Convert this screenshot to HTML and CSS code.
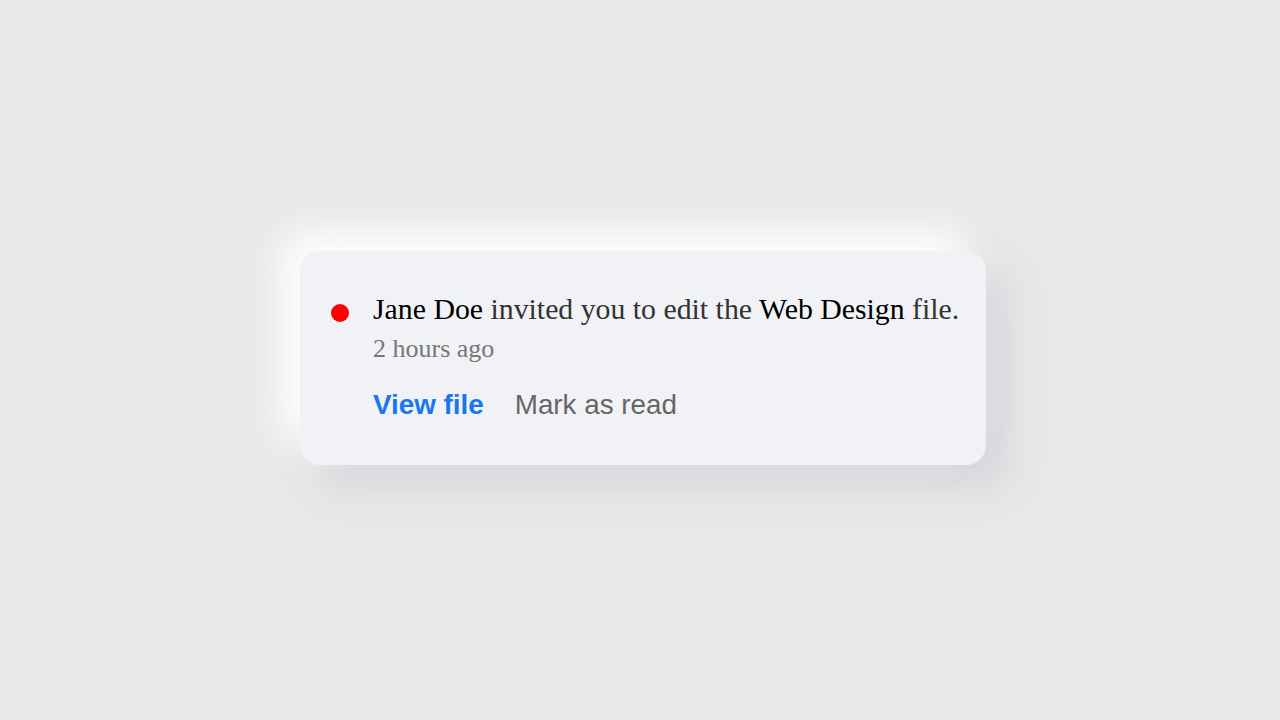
FILE: index.html
```html
<html>

<head>
  <meta name="viewport" content="width=device-width, initial-scale=1.0">
  <link rel="stylesheet" href="styles.css">
</head>

<body>
  <div class="notification">
    <span class="dot"></span>
    <div class="content">
      <p class="message"><span class="name">Jane Doe</span> invited you to edit the <span class="name">Web Design</span> file.</p>
      <p class="time">2 hours ago</p>
      <div class="actions">
        <a href="#" class="btn btn_primary">View file</a>
        <a href="#" class="btn btn_secondary">Mark as read</a>
      </div>
    </div>
  </div>
</body>

</html>
```

FILE: styles.css
```css
* {
  box-sizing: border-box;
}

body {
  margin: 0;
  padding: 0;
  min-height: 100vh;
  background-color: #e8e8e8;
  display: flex;
  align-items: center;
  justify-content: center;
  font-family: "Liberation Serif", "Times New Roman", serif;
}

.notification {
  display: flex;
  align-items: flex-start;
  gap: 24px;
  width: 686px;
  margin-left: 6px;
  margin-top: -5px;
  padding: 36px 20px 42px 31px;
  border-radius: 20px;
  background-color: #f1f2f5;
  box-shadow: -20px -20px 40px #ffffff, 20px 20px 40px #d2d4d9;
}

.dot {
  flex-shrink: 0;
  width: 18px;
  height: 18px;
  margin-top: 17px;
  border-radius: 50%;
  background-color: #ff0000;
}

.content {
  flex: 1;
}

.message {
  margin: 0;
  font-size: 29.8px;
  line-height: 44px;
  white-space: nowrap;
  color: #333333;
}

.name {
  color: #000000;
}

.time {
  margin: 0;
  font-size: 26px;
  line-height: 36px;
  color: #777777;
}

.actions {
  display: flex;
  gap: 31px;
  margin-top: 20px;
}

.btn {
  font-family: "Liberation Sans", Arial, sans-serif;
  font-size: 27.8px;
  line-height: 36px;
  text-decoration: none;
}

.btn_primary {
  color: #1877f2;
  font-weight: bold;
}

.btn_secondary {
  color: #666666;
}
```
